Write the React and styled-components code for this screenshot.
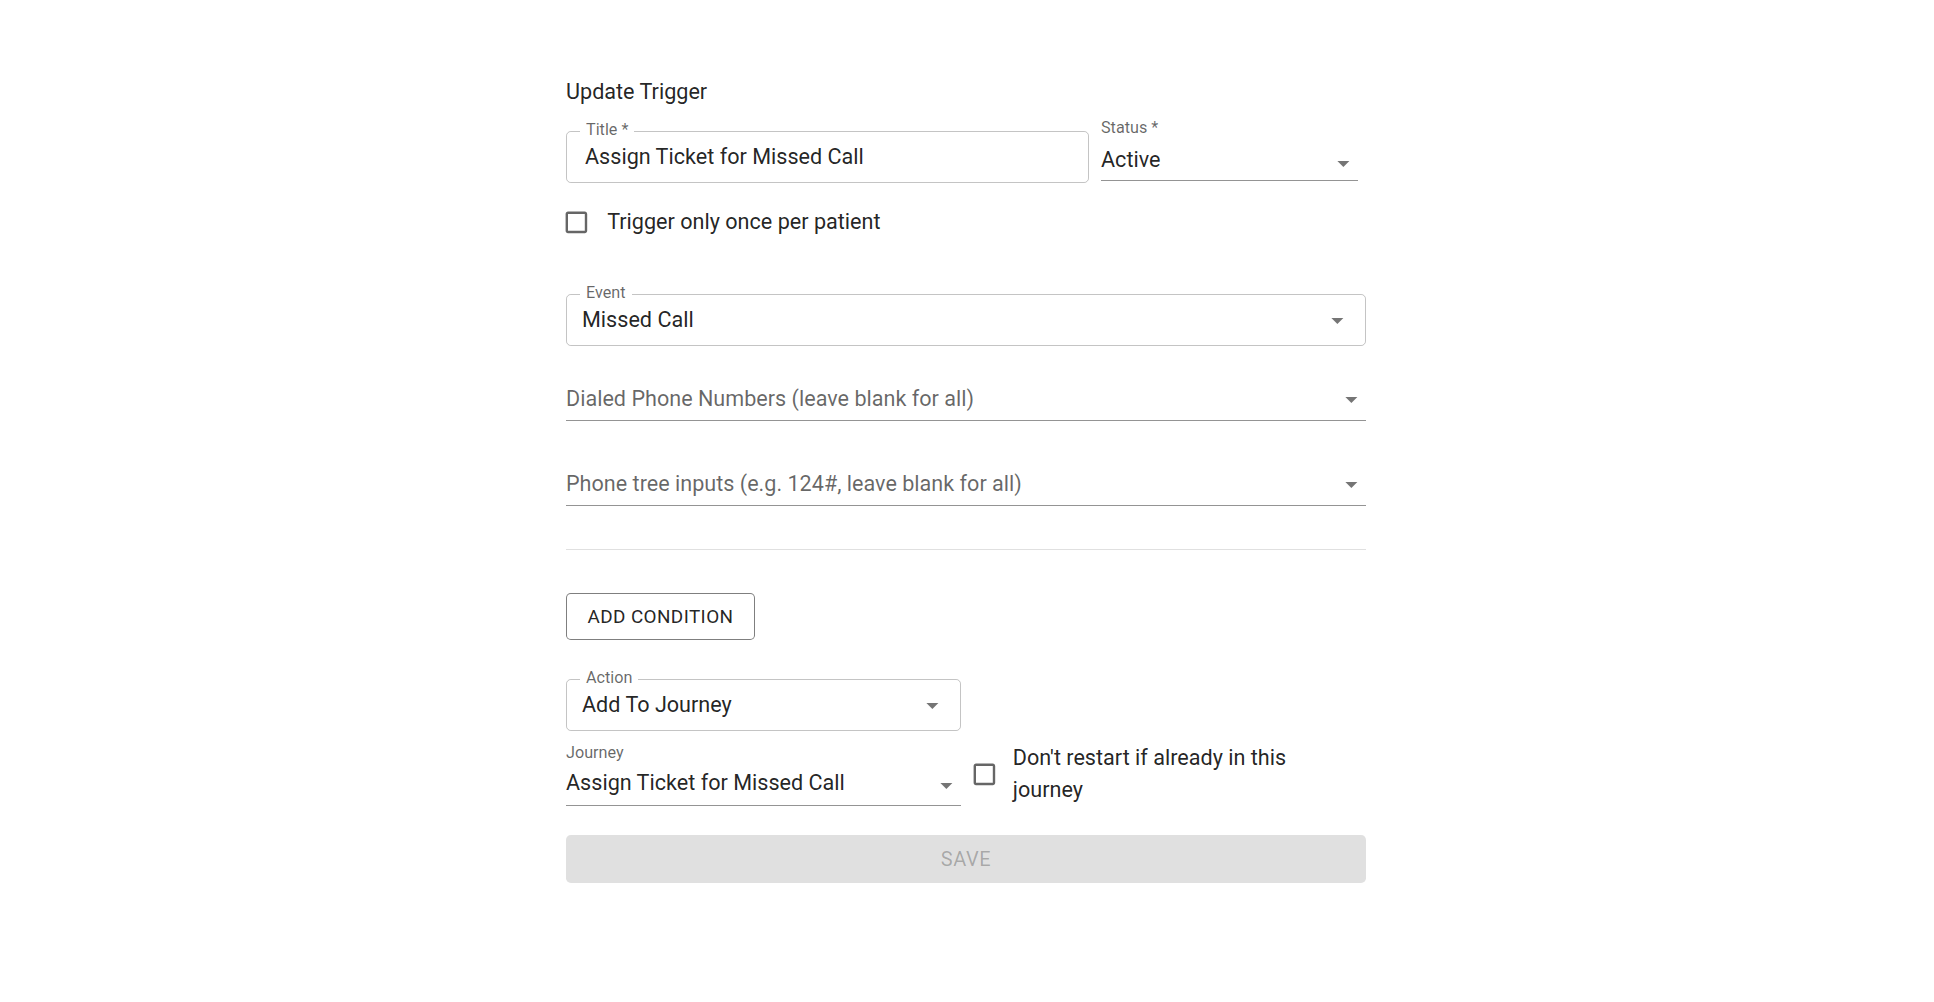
import React from "react";
import styled, { createGlobalStyle } from "styled-components";

const GlobalStyle = createGlobalStyle`
  body {
    margin: 0;
    background: #fff;
    font-family: Roboto, "Liberation Sans", sans-serif;
    color: rgba(0, 0, 0, 0.87);
  }
`;

const Page = styled.div`
  padding: 76px 2px 80px 0;
`;

const Form = styled.form`
  width: 800px;
  margin: 0 auto;
  display: flex;
  flex-direction: column;
`;

const Heading = styled.h2`
  margin: 0;
  font-size: 21.6px;
  font-weight: 400;
  line-height: 32.4px;
`;

const Row = styled.div`
  display: flex;
  align-items: ${(p) => p.$align || "flex-start"};
  gap: ${(p) => p.$gap || 12}px;
  margin-top: ${(p) => p.$mt || 0}px;
`;

const Outlined = styled.div`
  position: relative;
  box-sizing: border-box;
  width: ${(p) => (p.$width ? `${p.$width}px` : "100%")};
  height: 52px;
  margin-top: ${(p) => p.$mt || 0}px;
  padding: 0 ${(p) => p.$pr || 0}px 0 ${(p) => p.$pl || 15}px;
  border: 1px solid rgba(0, 0, 0, 0.23);
  border-radius: 4.8px;
  display: flex;
  align-items: center;
  flex-shrink: 0;
`;

const FloatLabel = styled.span`
  position: absolute;
  left: 13px;
  top: -2px;
  transform: translateY(-50%);
  padding: 0 6px;
  background: #fff;
  font-size: 16.2px;
  line-height: 1;
  color: rgba(0, 0, 0, 0.6);
`;

const Value = styled.span`
  flex: 1;
  font-size: 21.6px;
  line-height: 32.4px;
  color: ${(p) => (p.$muted ? "rgba(0, 0, 0, 0.6)" : "rgba(0, 0, 0, 0.87)")};
  white-space: nowrap;
`;

const Standard = styled.div`
  box-sizing: border-box;
  width: ${(p) => (p.$width ? `${p.$width}px` : "100%")};
  margin-top: ${(p) => p.$mt || 0}px;
  flex-shrink: 0;
  display: flex;
  flex-direction: column;
`;

const SmallLabel = styled.span`
  font-size: 16.2px;
  line-height: 22px;
  color: rgba(0, 0, 0, 0.6);
`;

const Underlined = styled.div`
  display: flex;
  align-items: center;
  margin-top: ${(p) => p.$gap || 0}px;
  padding-bottom: ${(p) => p.$pb || 5}px;
  border-bottom: 1px solid rgba(0, 0, 0, 0.42);
`;

const Arrow = styled.svg`
  width: 28.8px;
  height: 28.8px;
  flex-shrink: 0;
  transform: translateY(${(p) => p.$dy || 0}px);
  fill: rgba(0, 0, 0, 0.54);
`;

const CheckLabel = styled.label`
  display: flex;
  align-items: center;
  gap: ${(p) => p.$gap || 16}px;
  margin-top: ${(p) => p.$mt || 0}px;
  margin-left: ${(p) => p.$ml || 0}px;
  font-size: 21.6px;
  line-height: 32.4px;
  cursor: pointer;
`;

const CheckText = styled.span`
  max-width: ${(p) => p.$max || 600}px;
`;

const Box = styled.svg`
  width: 28.8px;
  height: 28.8px;
  flex-shrink: 0;
  fill: rgba(0, 0, 0, 0.6);
`;

const Divider = styled.hr`
  margin: 43px 0 0;
  border: none;
  border-top: 1px solid rgba(0, 0, 0, 0.12);
`;

const OutlineButton = styled.button`
  align-self: flex-start;
  margin-top: 43px;
  height: 46.6px;
  padding: 0 20.5px;
  background: #fff;
  border: 1px solid rgba(0, 0, 0, 0.5);
  border-radius: 4.8px;
  font-family: Roboto, "Liberation Sans", sans-serif;
  font-size: 18.9px;
  font-weight: 400;
  letter-spacing: 0.4px;
  text-transform: uppercase;
  color: rgba(0, 0, 0, 0.87);
  cursor: pointer;
`;

const SaveButton = styled.button`
  margin-top: 28px;
  height: 48px;
  border: none;
  border-radius: 4.8px;
  background: rgba(0, 0, 0, 0.12);
  color: rgba(0, 0, 0, 0.26);
  font-family: Roboto, "Liberation Sans", sans-serif;
  font-size: 20px;
  font-weight: 400;
  letter-spacing: 0.54px;
  text-transform: uppercase;
`;

const DropArrow = ({ dy }) => (
  <Arrow viewBox="0 0 24 24" $dy={dy}>
    <path d="M7 10l5 5 5-5z" />
  </Arrow>
);

const EmptyBox = () => (
  <Box viewBox="0 0 24 24">
    <path d="M19 5v14H5V5h14m0-2H5c-1.11 0-2 .9-2 2v14c0 1.1.89 2 2 2h14c1.1 0 2-.9 2-2V5c0-1.1-.9-2-2-2z" />
  </Box>
);

const App = () => {
  return (
    <Page>
      <GlobalStyle />
      <Form onSubmit={(e) => e.preventDefault()}>
        <Heading>Update Trigger</Heading>

        <Row $mt={8.6}>
          <Outlined $width={523} $mt={14} $pl={18}>
            <FloatLabel>Title *</FloatLabel>
            <Value>Assign Ticket for Missed Call</Value>
          </Outlined>
          <Standard $width={257}>
            <SmallLabel>Status *</SmallLabel>
            <Underlined $gap={4.8} $pb={4.2}>
              <Value>Active</Value>
              <DropArrow dy={3} />
            </Underlined>
          </Standard>
        </Row>

        <CheckLabel $mt={23.3} $ml={-3.6}>
          <EmptyBox />
          <span>Trigger only once per patient</span>
        </CheckLabel>

        <Outlined $mt={55.3} $pr={13}>
          <FloatLabel>Event</FloatLabel>
          <Value>Missed Call</Value>
          <DropArrow />
        </Outlined>

        <Standard $mt={36.8}>
          <Underlined $pb={4.8}>
            <Value $muted>Dialed Phone Numbers (leave blank for all)</Value>
            <DropArrow />
          </Underlined>
        </Standard>

        <Standard $mt={46.8}>
          <Underlined $pb={4.8}>
            <Value $muted>Phone tree inputs (e.g. 124#, leave blank for all)</Value>
            <DropArrow />
          </Underlined>
        </Standard>

        <Divider />

        <OutlineButton type="button">Add Condition</OutlineButton>

        <Outlined $width={395} $mt={39.4} $pr={13}>
          <FloatLabel>Action</FloatLabel>
          <Value>Add To Journey</Value>
          <DropArrow />
        </Outlined>

        <Row $mt={11} $gap={9} $align="center">
          <Standard $width={395}>
            <SmallLabel>Journey</SmallLabel>
            <Underlined $gap={2.8} $pb={5.8}>
              <Value>Assign Ticket for Missed Call</Value>
              <DropArrow dy={2} />
            </Underlined>
          </Standard>
          <CheckLabel $gap={14}>
            <EmptyBox />
            <CheckText $max={290}>Don't restart if already in this journey</CheckText>
          </CheckLabel>
        </Row>

        <SaveButton type="submit" disabled>
          Save
        </SaveButton>
      </Form>
    </Page>
  );
};

export default App;
